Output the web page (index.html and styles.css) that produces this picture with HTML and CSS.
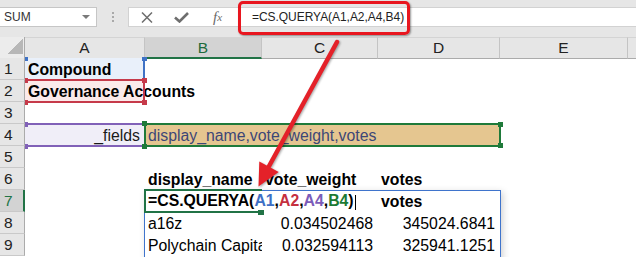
FILE: index.html
```html
<!DOCTYPE html>
<html>
<head>
<meta charset="utf-8">
<link rel="stylesheet" href="styles.css">
</head>
<body>
<div class="app">
  <div class="toolbar">
    <div class="namebox"><span>SUM</span><span class="dd"></span></div>
    <div class="grip"><i></i><i></i><i></i></div>
    <div class="fbar">
      <span class="btn"><svg width="12" height="11" viewBox="0 0 12 11"><path d="M1 0.5 L11 10.5 M11 0.5 L1 10.5" stroke="#6e6e6e" stroke-width="1.5" fill="none"/></svg></span>
      <span class="btn"><svg width="15" height="11" viewBox="0 0 15 11"><path d="M1 5.5 L5.5 9.5 L14 1" stroke="#6e6e6e" stroke-width="2.6" fill="none"/></svg></span>
      <span class="btn fx"><i>f</i><sub>x</sub></span>
      <span class="ftext">=CS.QUERYA(A1,A2,A4,B4)</span>
    </div>
  </div>
  <div class="sheet">
    <div class="row hdr">
      <div class="corner"></div>
      <div class="ch">A</div>
      <div class="ch sel">B</div>
      <div class="ch">C</div>
      <div class="ch">D</div>
      <div class="ch">E</div>
      <div class="ch last"></div>
    </div>
    <div class="row">
      <div class="rh">1</div>
      <div class="c b fill-a1">Compound</div>
      <div class="c"></div><div class="c"></div><div class="c"></div><div class="c"></div><div class="c"></div>
    </div>
    <div class="row">
      <div class="rh">2</div>
      <div class="c b fill-a2">Governance Accounts</div>
      <div class="c"></div><div class="c"></div><div class="c"></div><div class="c"></div><div class="c"></div>
    </div>
    <div class="row">
      <div class="rh">3</div>
      <div class="c"></div><div class="c"></div><div class="c"></div><div class="c"></div><div class="c"></div><div class="c"></div>
    </div>
    <div class="row">
      <div class="rh">4</div>
      <div class="c r fill-a4">_fields</div>
      <div class="c span3 fill-b4">display_name,vote_weight,votes</div>
      <div class="c"></div><div class="c"></div>
    </div>
    <div class="row">
      <div class="rh">5</div>
      <div class="c"></div><div class="c"></div><div class="c"></div><div class="c"></div><div class="c"></div><div class="c"></div>
    </div>
    <div class="row">
      <div class="rh">6</div>
      <div class="c"></div>
      <div class="c b">display_name</div>
      <div class="c b">vote_weight</div>
      <div class="c b">votes</div>
      <div class="c"></div><div class="c"></div>
    </div>
    <div class="row">
      <div class="rh sel">7</div>
      <div class="c"></div>
      <div class="c b edit">=CS.QUERYA(<span class="k-blue">A1</span>,<span class="k-red">A2</span>,<span class="k-purple">A4</span>,<span class="k-green">B4</span>)</div>
      <div class="c"></div>
      <div class="c b">votes</div>
      <div class="c"></div><div class="c"></div>
    </div>
    <div class="row">
      <div class="rh">8</div>
      <div class="c"></div>
      <div class="c">a16z</div>
      <div class="c r">0.034502468</div>
      <div class="c r">345024.6841</div>
      <div class="c"></div><div class="c"></div>
    </div>
    <div class="row">
      <div class="rh">9</div>
      <div class="c"></div>
      <div class="c clip">Polychain Capital</div>
      <div class="c r">0.032594113</div>
      <div class="c r">325941.1251</div>
      <div class="c"></div><div class="c"></div>
    </div>
  </div>

  <div class="spill"></div>
  <div class="rng rng-a1"></div>
  <div class="rng rng-a2"></div>
  <div class="rng rng-a4"></div>
  <div class="rng rng-b4"></div>
  <div class="editbox"></div>
  <div class="handle"></div>
  <div class="caret"></div>

  <div class="sq sq-blue sq-a1l"></div>
  <div class="sq sq-blue sq-a1r"></div>
  <div class="sq sq-red sq-a2tl"></div>
  <div class="sq sq-red sq-a2tr"></div>
  <div class="sq sq-red sq-a2bl"></div>
  <div class="sq sq-red sq-a2br"></div>
  <div class="sq sq-purple sq-a4tl"></div>
  <div class="sq sq-purple sq-a4bl"></div>
  <div class="sq sq-green sq-b4tl"></div>
  <div class="sq sq-green sq-b4bl"></div>
  <div class="sq sq-green sq-b4tr"></div>
  <div class="sq sq-green sq-b4br"></div>

  <div class="callout"></div>
  <svg class="arrow" width="636" height="257" viewBox="0 0 636 257">
    <line x1="337" y1="42" x2="268" y2="168" stroke="#e42129" stroke-width="4.5" stroke-linecap="round"/>
    <polygon points="258.5,186.5 259.3,161.4 278.7,172" fill="#e42129"/>
  </svg>
</div>
</body>
</html>
```

FILE: styles.css
```css
* { box-sizing: border-box; }
html, body { margin: 0; padding: 0; }
body {
  width: 636px;
  height: 257px;
  overflow: hidden;
  background: #ffffff;
  font-family: "Liberation Sans", Arial, sans-serif;
  color: #000;
}
.app { position: relative; width: 636px; height: 257px; overflow: hidden; }

/* toolbar */
.toolbar {
  height: 37px;
  background: #e6e6e6;
  display: flex;
  align-items: flex-start;
  padding-top: 7px;
}
.namebox {
  width: 97px;
  height: 20px;
  background: #fff;
  border: 1px solid #c6c6c6;
  border-left: none;
  display: flex;
  align-items: center;
  justify-content: space-between;
  padding: 0 6px 0 4px;
  font-size: 12px;
  color: #333;
}
.dd {
  width: 0; height: 0;
  border-left: 4px solid transparent;
  border-right: 4px solid transparent;
  border-top: 4px solid #7a7a7a;
}
.grip {
  width: 31px;
  height: 20px;
  display: flex;
  flex-direction: column;
  align-items: center;
  justify-content: center;
  gap: 2px;
}
.grip i { display: block; width: 2px; height: 2px; background: #a9a9a9; }
.fbar {
  flex: 1;
  height: 20px;
  background: #fff;
  border: 1px solid #d2d2d2;
  border-right: none;
  display: flex;
  align-items: center;
  padding-left: 1px;
}
.btn {
  width: 34px;
  height: 18px;
  display: flex;
  align-items: center;
  justify-content: center;
}
.fx {
  justify-content: flex-start;
  padding-left: 15px;
  font-family: "Liberation Serif", "Times New Roman", serif;
  font-size: 15px;
  color: #6a6a6a;
}
.fx sub { font-size: 11px; font-style: italic; vertical-align: -1px; margin-left: 0; }
.ftext {
  margin-left: 20px;
  font-size: 12px;
  color: #222;
  letter-spacing: -0.05px;
}

/* sheet */
.sheet { display: flex; flex-direction: column; }
.row {
  display: grid;
  grid-template-columns: 25px 120px 117px 116px 122px 128px 8px;
  height: 22px;
}
.row.hdr { height: 21px; }
.corner {
  background-color: #ececec;
  border-right: 1px solid #ababab;
  border-bottom: 1px solid #ababab;
  background-image: linear-gradient(to bottom right, transparent 50%, #b7b7b7 50%);
  background-size: 15px 15px;
  background-position: right 1px bottom 4px;
  background-repeat: no-repeat;
}
.ch {
  background: #e6e6e6;
  border-top: 1px solid #d4d4d4;
  border-right: 1px solid #c4c4c4;
  border-bottom: 1px solid #ababab;
  text-align: center;
  font-size: 15.5px;
  line-height: 19px;
  color: #222;
}
.ch.sel {
  background: #d3d3d3;
  border-bottom: 2px solid #217346;
  color: #1e6b3c;
}
.ch.last { border-right: none; }
.rh {
  background: #e6e6e6;
  border-right: 1px solid #ababab;
  border-bottom: 1px solid #c9c9c9;
  font-size: 15.5px;
  line-height: 20px;
  padding: 1px 0 0 4px;
  color: #222;
}
.rh.sel {
  background: #d3d3d3;
  border-right: 2px solid #217346;
  color: #217346;
}
.c {
  font-size: 15.8px;
  line-height: 20px;
  padding: 2px 5px 0 3px;
  white-space: nowrap;
  overflow: visible;
  min-width: 0;
}
.c.b { font-weight: bold; }
.c.r { text-align: right; }
.c.clip { overflow: hidden; padding-right: 0; }
.c.span3 { grid-column: span 3; }
.c.edit { padding-top: 1px; }
.fill-a1 { background: #e9f0fa; }
.fill-a2 { background: #fbeaea; }
.fill-a4 { background: #f0eef8; color: #1a1a1a; }
.fill-b4 { background: #e5c690; color: #3d4677; }
.k-blue { color: #3d6fc5; }
.k-red { color: #c5303f; }
.k-purple { color: #7b5cb9; }
.k-green { color: #1c7a34; }

/* overlays */
.spill {
  position: absolute;
  left: 144px; top: 190px; width: 357px; height: 90px;
  border: 1.5px solid #3f74cc;
  box-shadow: 2px 2px 7px rgba(0,0,0,0.18);
}
.rng { position: absolute; }
.rng-a1 { left: 25px; top: 58px; width: 120px; height: 22px; border-right: 2px solid #3f72c5; }
.rng-a2 { left: 25px; top: 79px; width: 120px; height: 24px; border: 2px solid #c63a4a; border-left: none; }
.rng-a4 { left: 25px; top: 123px; width: 120px; height: 24px; border-top: 2px solid #8161b8; border-bottom: 2px solid #8161b8; }
.rng-b4 { left: 144px; top: 123px; width: 357px; height: 24px; border: 2px solid #1f7a3a; }
.editbox {
  position: absolute;
  left: 144px; top: 189px; width: 118px; height: 24px;
  border: 2px solid #217346;
  border-right: none;
}
.handle { position: absolute; left: 258px; top: 210px; width: 6px; height: 5px; background: #217346; }
.caret { position: absolute; left: 355px; top: 195px; width: 1px; height: 15px; background: #000; }

.sq { position: absolute; width: 5px; height: 5px; }
.sq-blue { background: #3f72c5; }
.sq-red { background: #c63a4a; }
.sq-purple { background: #8161b8; }
.sq-green { background: #1f7a3a; }
.sq-a1l { left: 25px; top: 57px; width: 3px; height: 4px; }
.sq-a1r { left: 142px; top: 57px; height: 4px; }
.sq-a2tl { left: 25px; top: 78px; width: 3px; }
.sq-a2tr { left: 142px; top: 78px; }
.sq-a2bl { left: 25px; top: 100px; width: 3px; }
.sq-a2br { left: 142px; top: 100px; }
.sq-a4tl { left: 25px; top: 122px; width: 3px; }
.sq-a4bl { left: 25px; top: 144px; width: 3px; }
.sq-b4tl { left: 142px; top: 121px; }
.sq-b4bl { left: 142px; top: 144px; }
.sq-b4tr { left: 498px; top: 122px; }
.sq-b4br { left: 498px; top: 143px; }

.callout {
  position: absolute;
  left: 238px; top: 1px; width: 172px; height: 34px;
  border: 3px solid #e8161f;
  border-radius: 5px;
  box-shadow: 1px 1px 2px rgba(0,0,0,0.4);
}
.arrow {
  position: absolute;
  left: 0; top: 0;
  filter: drop-shadow(1px 1px 1px rgba(0,0,0,0.35));
}
```
